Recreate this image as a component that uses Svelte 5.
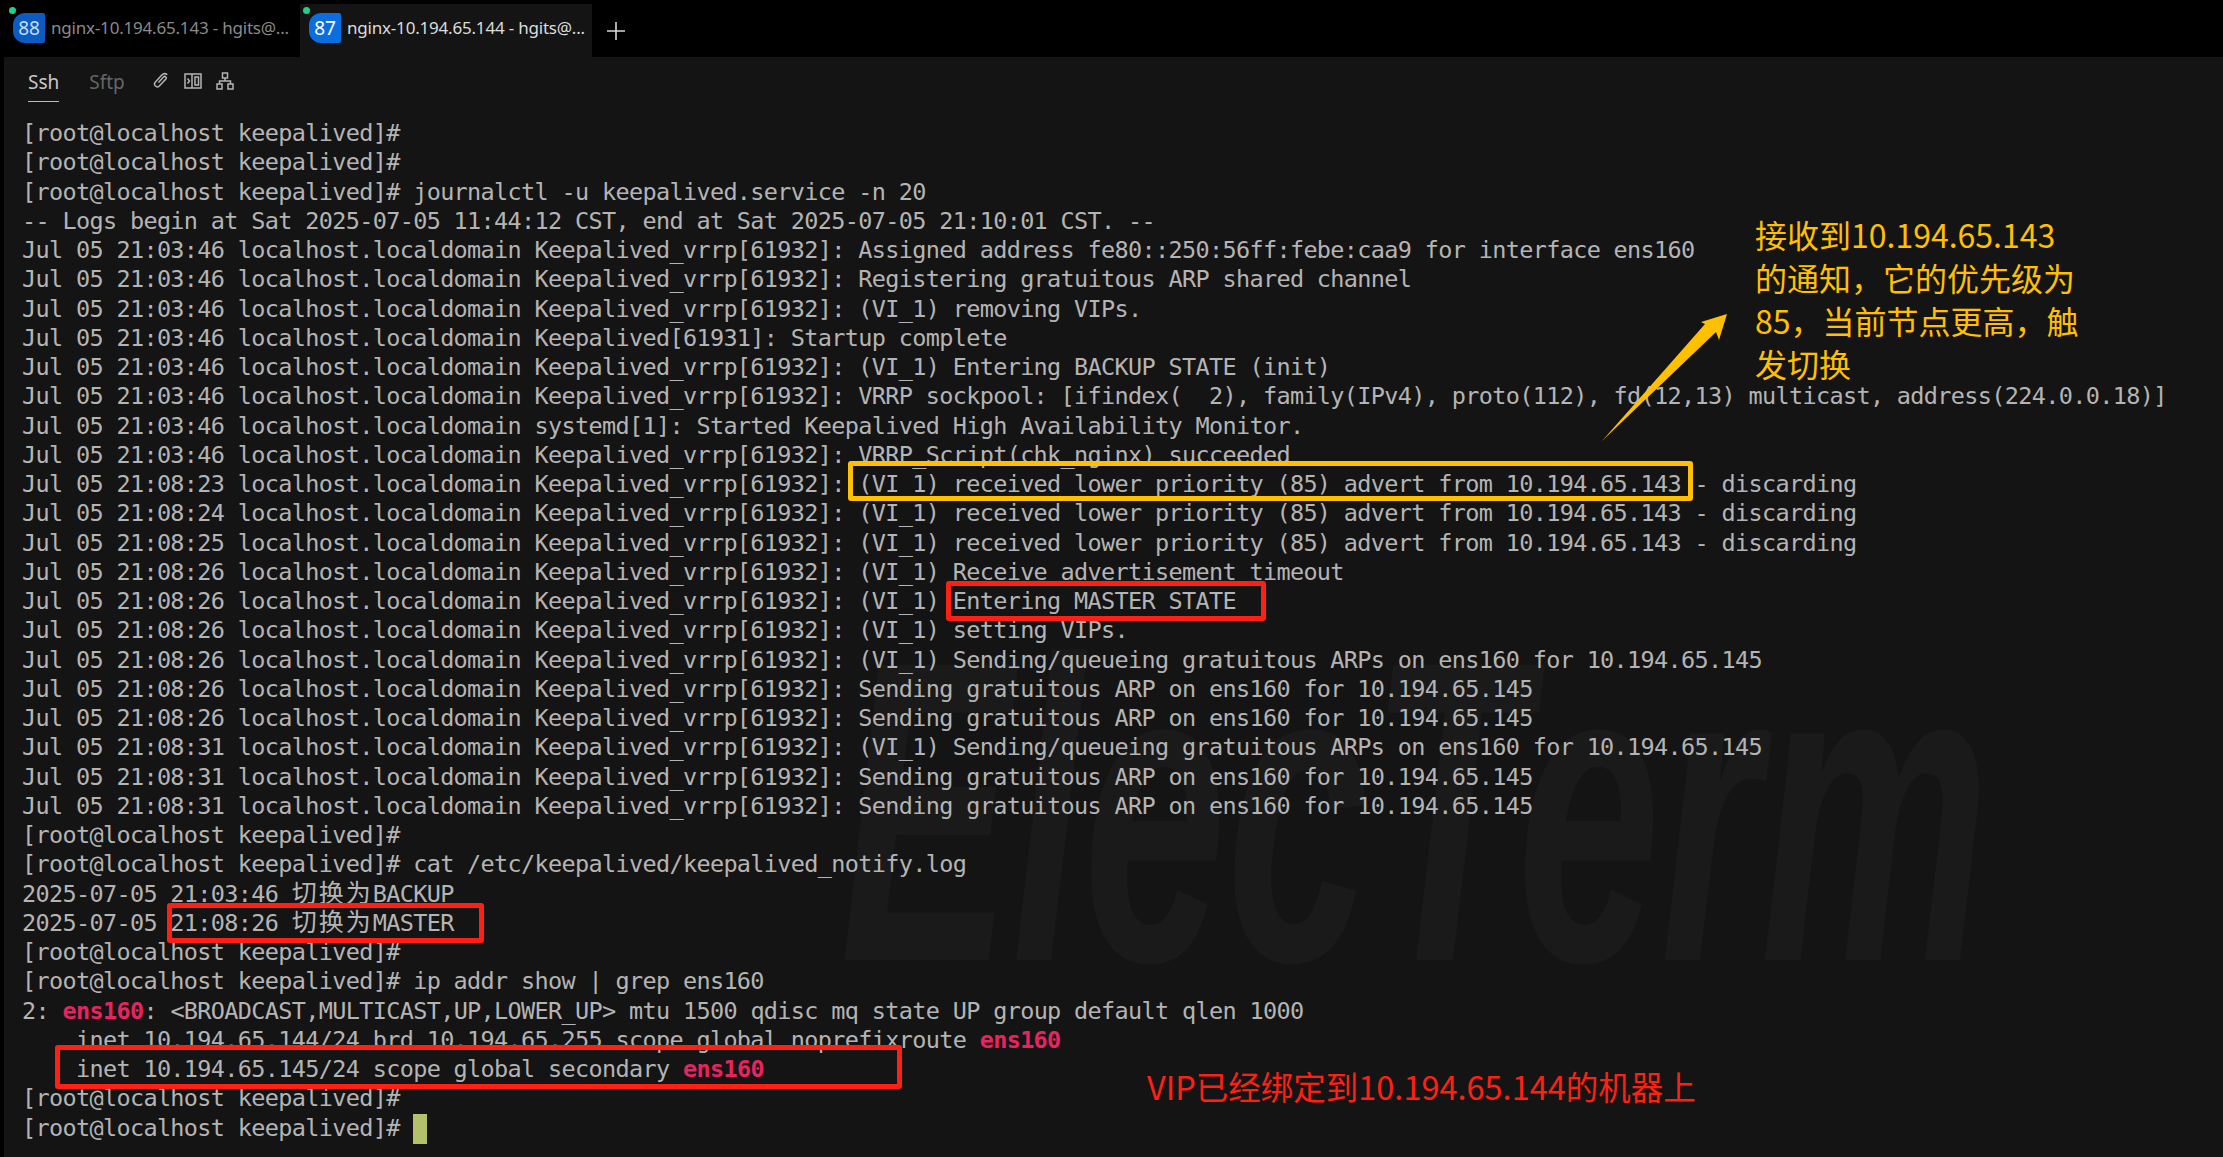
<script>
	const P = '[root@localhost keepalived]#';
	const J = 'Jul 05 21:0';
	const V = ' localhost.localdomain Keepalived_vrrp[61932]: ';

	// each line is a list of [text, kind] parts, kind: '' | 'pink' | 'cjk' | 'cursor'
	const lines = [
		[[P]],
		[[P]],
		[[P + ' journalctl -u keepalived.service -n 20']],
		[['-- Logs begin at Sat 2025-07-05 11:44:12 CST, end at Sat 2025-07-05 21:10:01 CST. --']],
		[[J + '3:46' + V + 'Assigned address fe80::250:56ff:febe:caa9 for interface ens160']],
		[[J + '3:46' + V + 'Registering gratuitous ARP shared channel']],
		[[J + '3:46' + V + '(VI_1) removing VIPs.']],
		[[J + '3:46 localhost.localdomain Keepalived[61931]: Startup complete']],
		[[J + '3:46' + V + '(VI_1) Entering BACKUP STATE (init)']],
		[[J + '3:46' + V + 'VRRP sockpool: [ifindex(  2), family(IPv4), proto(112), fd(12,13) multicast, address(224.0.0.18)]']],
		[[J + '3:46 localhost.localdomain systemd[1]: Started Keepalived High Availability Monitor.']],
		[[J + '3:46' + V + 'VRRP_Script(chk_nginx) succeeded']],
		[[J + '8:23' + V + '(VI_1) received lower priority (85) advert from 10.194.65.143 - discarding']],
		[[J + '8:24' + V + '(VI_1) received lower priority (85) advert from 10.194.65.143 - discarding']],
		[[J + '8:25' + V + '(VI_1) received lower priority (85) advert from 10.194.65.143 - discarding']],
		[[J + '8:26' + V + '(VI_1) Receive advertisement timeout']],
		[[J + '8:26' + V + '(VI_1) Entering MASTER STATE']],
		[[J + '8:26' + V + '(VI_1) setting VIPs.']],
		[[J + '8:26' + V + '(VI_1) Sending/queueing gratuitous ARPs on ens160 for 10.194.65.145']],
		[[J + '8:26' + V + 'Sending gratuitous ARP on ens160 for 10.194.65.145']],
		[[J + '8:26' + V + 'Sending gratuitous ARP on ens160 for 10.194.65.145']],
		[[J + '8:31' + V + '(VI_1) Sending/queueing gratuitous ARPs on ens160 for 10.194.65.145']],
		[[J + '8:31' + V + 'Sending gratuitous ARP on ens160 for 10.194.65.145']],
		[[J + '8:31' + V + 'Sending gratuitous ARP on ens160 for 10.194.65.145']],
		[[P]],
		[[P + ' cat /etc/keepalived/keepalived_notify.log']],
		[['2025-07-05 21:03:46 '], ['切换为', 'cjk'], ['BACKUP']],
		[['2025-07-05 21:08:26 '], ['切换为', 'cjk'], ['MASTER']],
		[[P]],
		[[P + ' ip addr show | grep ens160']],
		[['2: '], ['ens160', 'pink'], [': <BROADCAST,MULTICAST,UP,LOWER_UP> mtu 1500 qdisc mq state UP group default qlen 1000']],
		[['    inet 10.194.65.144/24 brd 10.194.65.255 scope global noprefixroute '], ['ens160', 'pink']],
		[['    inet 10.194.65.145/24 scope global secondary '], ['ens160', 'pink']],
		[[P]],
		[[P + ' '], [' ', 'cursor']]
	];

	const tabs = [
		{ badge: '88', title: 'nginx-10.194.65.143 - hgits@...', active: false },
		{ badge: '87', title: 'nginx-10.194.65.144 - hgits@...', active: true }
	];
</script>

<div class="app">
	<header class="tabbar">
		{#each tabs as tab}
			<div class="tab" class:active={tab.active}>
				<span class="dot"></span>
				<span class="badge">{tab.badge}</span>
				<span class="title">{tab.title}</span>
			</div>
		{/each}
		<svg class="plus" width="20" height="20" viewBox="0 0 20 20">
			<path d="M10 1v18M1 10h18" stroke="#d8d8d8" stroke-width="1.6" fill="none" />
		</svg>
	</header>

	<nav class="subbar">
		<span class="sub on">Ssh</span>
		<span class="sub">Sftp</span>
		<div class="tools">
			<svg width="18" height="18" viewBox="0 0 18 18" fill="none" stroke="#b4b4b4" stroke-width="1.5">
				<path d="M6.5 10.5l5-5.6a1.6 1.6 0 0 1 2.4 2.1l-6.6 7a2.8 2.8 0 0 1-4.1-3.8l6.6-7.2a4 4 0 0 1 5.5-.2" />
			</svg>
			<svg width="18" height="18" viewBox="0 0 18 18" fill="none" stroke="#b4b4b4" stroke-width="1.5">
				<path d="M1 2h16v14H1zM8 2v14M11 5h3.500v8H11z" />
				<path d="M3.500 6.500L5.500 9l-2 2.500" />
			</svg>
			<svg width="18" height="18" viewBox="0 0 18 18" fill="none" stroke="#b4b4b4" stroke-width="1.500">
				<path d="M6.500 1h5v5h-5zM1 12h5v5H1zM12 12h5v5h-5zM9 6v3M3.500 12V9h11v3" />
			</svg>
		</div>
	</nav>

	<main class="term">
		<div class="watermark">ElecTerm</div>
		{#each lines as parts}
			<div class="line">{#each parts as [text, kind]}<span class={kind ?? ''}>{text}</span>{/each}</div>
		{/each}

		<div class="box yellow-box"></div>
		<div class="box state-box"></div>
		<div class="box time-box"></div>
		<div class="box inet-box"></div>

		<svg class="arrow" width="140" height="140" viewBox="0 0 140 140">
			<path d="M7 131 L110 14 L106 12 L132 4 L124 30 L121 22 Z" fill="#ffc000" />
		</svg>
		<p class="note yellow">接收到10.194.65.143<br />的通知，它的优先级为<br />85，当前节点更高，触<br />发切换</p>
		<p class="note red">VIP已经绑定到10.194.65.144的机器上</p>
	</main>
</div>

<style>
	:global(body) {
		margin: 0;
		background: #141414;
	}

	.app {
		height: 1157px;
		overflow: hidden;
		border-left: 4px solid #000;
		box-sizing: border-box;
		background: #141414;
	}

	.tabbar {
		display: flex;
		align-items: flex-end;
		height: 57px;
		margin-left: -4px;
		background: #000;
	}

	.tab {
		position: relative;
		display: flex;
		align-items: center;
		gap: 6px;
		width: 300px;
		height: 53px;
		box-sizing: border-box;
		padding: 0 0 6px 13px;
		font-family: 'Noto Sans', sans-serif;
		font-size: 17px;
		color: #8a8a8a;
	}

	.tab.active {
		width: 292px;
		padding-left: 9px;
		background: #141414;
		color: #dcdcdc;
	}

	.dot {
		position: absolute;
		left: 9px;
		top: 3px;
		width: 7px;
		height: 7px;
		border-radius: 50%;
		background: #1fd08c;
	}

	.tab.active .dot {
		left: 3px;
	}

	.badge {
		display: flex;
		flex: none;
		align-items: center;
		justify-content: center;
		width: 32px;
		height: 30px;
		border-radius: 12px 2px 2px 12px;
		background: #0b5cc0;
		font-size: 19px;
		color: #c9dcf5;
	}

	.tab.active .badge {
		background: #0a6ee0;
		color: #fff;
	}

	.title {
		white-space: nowrap;
		letter-spacing: -0.2px;
	}

	.plus {
		margin: 0 0 16px 14px;
	}

	.subbar {
		display: flex;
		align-items: flex-start;
		height: 47px;
		padding-left: 24px;
		font-family: 'Noto Sans', sans-serif;
		font-size: 19px;
	}

	.sub {
		margin-right: 30px;
		padding: 13px 0 6px;
		line-height: 25px;
		color: #666;
	}

	.sub.on {
		border-bottom: 1px solid #bbb;
		color: #c8c8c8;
	}

	.tools {
		display: flex;
		gap: 14px;
		margin: 15px 0 0 -3px;
	}

	.term {
		position: relative;
		padding: 15px 0 0 18px;
		font-family: 'DejaVu Sans Mono', monospace;
		font-size: 23.500px;
		line-height: 29.250px;
		letter-spacing: -0.660px;
		color: #b4b4b4;
	}

	.line {
		position: relative;
		height: 29.250px;
		white-space: pre;
	}

	.cjk {
		font-family: 'Noto Sans CJK SC', sans-serif;
		font-size: 25px;
		line-height: 0;
		letter-spacing: 2px;
	}

	.pink {
		font-weight: 700;
		color: #e8245f;
	}

	.cursor {
		display: inline-block;
		width: 14px;
		height: 30px;
		vertical-align: top;
		background: #b5c06a;
	}

	.watermark {
		position: absolute;
		left: 836px;
		top: 513px;
		font-family: 'Liberation Sans', sans-serif;
		font-weight: 700;
		font-style: italic;
		font-size: 330px;
		line-height: 300px;
		letter-spacing: 0;
		color: #1a1a1a;
		transform-origin: 0 0;
		transform: scale(0.78, 1.3);
	}

	.box {
		position: absolute;
		box-sizing: border-box;
		border: 5px solid #ff2015;
		border-radius: 3px;
	}

	.yellow-box {
		left: 844px;
		top: 357px;
		width: 845px;
		height: 40px;
		border-color: #ffc000;
	}

	.state-box {
		left: 942px;
		top: 477px;
		width: 320px;
		height: 40px;
	}

	.time-box {
		left: 163px;
		top: 799px;
		width: 317px;
		height: 40px;
	}

	.inet-box {
		left: 51px;
		top: 941px;
		width: 847px;
		height: 44px;
	}

	.arrow {
		position: absolute;
		left: 1591px;
		top: 206px;
	}

	.note {
		position: absolute;
		margin: 0;
		font-family: 'Noto Sans CJK SC', sans-serif;
		letter-spacing: 0;
	}

	.yellow {
		left: 1751px;
		top: 109px;
		font-size: 32px;
		line-height: 43px;
		color: #ffc000;
	}

	.red {
		left: 1143px;
		top: 960px;
		font-size: 32.500px;
		line-height: 43px;
		color: #ff2015;
	}
</style>
